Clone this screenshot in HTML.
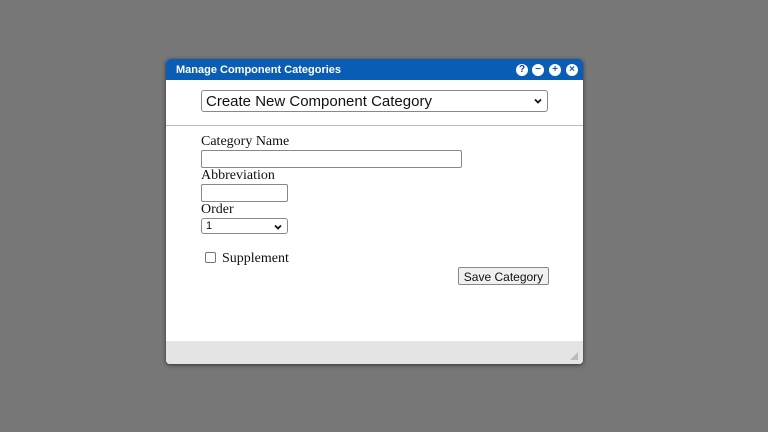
<!DOCTYPE html>
<html><head><style>
*{margin:0;padding:0;box-sizing:border-box}
body{width:768px;height:432px;background:#777;position:relative;overflow:hidden;font-family:"Liberation Serif",serif}
.dlg{position:absolute;left:166px;top:59px;width:417px;height:305px;background:#fff;border-radius:4px;box-shadow:0 1px 4px rgba(0,0,0,.6);overflow:hidden}
.tb{position:absolute;left:0;top:0;width:100%;height:21px;background:#0a5db5;color:#fff;font:bold 11px "Liberation Sans",sans-serif;padding:5px 0 0 10px}
.ic{position:absolute;top:5px;width:12px;height:12px;border-radius:50%;background:#fff;color:#0a5db5;font:bold 10px/12px "Liberation Sans",sans-serif;text-align:center}
.a{position:absolute}
.inp{position:absolute;border:1px solid #888;border-radius:2px;background:#fff}
.lbl{position:absolute;font-size:14px;color:#111}
.sel{position:absolute;border:1px solid #888;border-radius:3px;background:#fff;font-family:"Liberation Sans",sans-serif;color:#111}
.ft{position:absolute;left:0;bottom:0;width:100%;height:23px;background:#e4e4e4}
svg.ch{position:absolute}
</style></head><body>
<div class="dlg">
<div class="tb">Manage Component Categories</div>
<div class="ic" style="left:350px;color:#1a3fd0">?</div>
<div class="ic" style="left:366px">−</div>
<div class="ic" style="left:383px">+</div>
<div class="ic" style="left:400px">×</div>
<div class="sel" style="left:35px;top:31px;width:347px;height:22px;font-size:15px;padding:2px 0 0 4px">Create New Component Category<svg class="ch" style="right:5px;top:7px" width="8" height="6"><path d="M1 1.5L4 4.5L7 1.5" stroke="#111" stroke-width="1.8" fill="none"/></svg></div>
<div class="a" style="left:0;top:66px;width:100%;height:1px;background:#bbb"></div>
<div class="lbl" style="left:35px;top:75px">Category Name</div>
<div class="inp" style="left:35px;top:91px;width:261px;height:18px"></div>
<div class="lbl" style="left:35px;top:109px">Abbreviation</div>
<div class="inp" style="left:35px;top:125px;width:87px;height:18px"></div>
<div class="lbl" style="left:35px;top:143px">Order</div>
<div class="sel" style="left:35px;top:159px;width:87px;height:16px;font-size:11px;padding:1px 0 0 4px">1<svg class="ch" style="right:5px;top:5px" width="8" height="6"><path d="M1 1.5L4 4.5L7 1.5" stroke="#111" stroke-width="1.8" fill="none"/></svg></div>
<div class="a" style="left:39px;top:193px;width:11px;height:11px;border:1px solid #777;border-radius:2px"></div>
<div class="lbl" style="left:56px;top:192px">Supplement</div>
<div class="sel" style="left:292px;top:208px;width:91px;height:18px;background:#f0f0f0;font-size:12px;padding:2px 0 0 0;text-align:center;border-radius:2px">Save Category</div>
<div class="ft"><div class="a" style="right:5px;bottom:4px;width:0;height:0;border-left:8px solid transparent;border-bottom:8px solid #bbb"></div></div>
</div>
</body></html>
